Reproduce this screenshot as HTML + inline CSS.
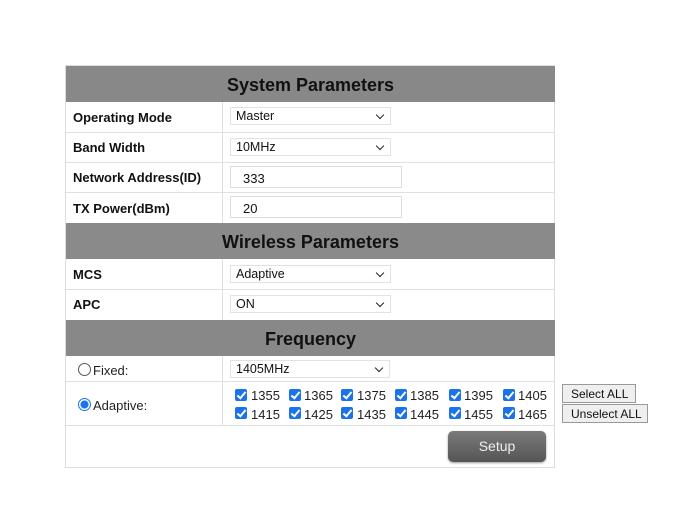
<!DOCTYPE html>
<html><head><meta charset="utf-8"><style>
body{margin:0;width:680px;height:519px;background:#fff;position:relative;font-family:"Liberation Sans",Arial,sans-serif;overflow:hidden}
.a{position:absolute}
.hd{position:absolute;left:66px;width:489px;background:#888;color:#111;font-weight:bold;font-size:18px;text-align:center}
.ln{position:absolute;left:66px;width:489px;height:1px;background:#e0e0e0}
.lb{position:absolute;left:73px;font-weight:bold;font-size:13px;color:#111}
.sel{position:absolute;left:230px;width:161px;height:18px;border:1px solid #e2e2e2;background:#fff;font-size:12.5px;color:#111;box-sizing:border-box;padding:1px 0 0 5px}
.sel:after{content:"";position:absolute;right:7px;top:4px;width:5px;height:5px;border-right:1.6px solid #222;border-bottom:1.6px solid #222;transform:rotate(45deg)}
.inp{position:absolute;left:230px;width:172px;height:22px;border:1px solid #ddd;box-sizing:border-box;font-size:13px;padding:4px 0 0 12px;color:#111}
.cb{position:absolute;width:12px;height:12px;background:#1a73e8;border-radius:2px}
.cb:after{content:"";position:absolute;left:4px;top:1px;width:3px;height:7px;border-right:2px solid #fff;border-bottom:2px solid #fff;transform:rotate(40deg)}
.ct{position:absolute;font-size:13px;color:#222}
.btn{position:absolute;left:562px;height:19px;border:1px solid #999;background:#efefef;font-size:12px;box-sizing:border-box;padding:2px 0 0 8px;color:#111}
</style></head><body>
<div class="a" style="left:65px;top:65px;width:490px;height:403px;border:1px solid #ddd;box-sizing:border-box"></div>
<div class="a" style="left:222px;top:102px;width:1px;height:324px;background:#e0e0e0"></div>
<div class="hd" style="top:66px;height:36px;line-height:38px">System Parameters</div>
<div class="ln" style="top:132px"></div><div class="ln" style="top:162px"></div><div class="ln" style="top:192px"></div>
<div class="lb" style="top:110px">Operating Mode</div>
<div class="lb" style="top:140px">Band Width</div>
<div class="lb" style="top:170px">Network Address(ID)</div>
<div class="lb" style="top:201px">TX Power(dBm)</div>
<div class="sel" style="top:107px">Master</div>
<div class="sel" style="top:138px">10MHz</div>
<div class="inp" style="top:166px">333</div>
<div class="inp" style="top:196px">20</div>
<div class="hd" style="top:223px;height:36px;line-height:38px;background:#8a8a8a">Wireless Parameters</div>
<div class="ln" style="top:289px"></div>
<div class="lb" style="top:267px">MCS</div>
<div class="lb" style="top:297px">APC</div>
<div class="sel" style="top:265px">Adaptive</div>
<div class="sel" style="top:295px">ON</div>
<div class="hd" style="top:320px;height:36px;line-height:38px">Frequency</div>
<div class="ln" style="top:381px"></div><div class="ln" style="top:425px"></div>
<div class="a" style="left:78px;top:363px;width:11px;height:11px;border:1px solid #555;border-radius:50%"></div>
<div class="ct" style="left:93px;top:363px">Fixed:</div>
<div class="a" style="left:78px;top:398px;width:11px;height:11px;border:1px solid #1a73e8;border-radius:50%;background:radial-gradient(circle,#1a73e8 3.5px,#fff 4.5px)"></div>
<div class="ct" style="left:93px;top:398px">Adaptive:</div>
<div class="sel" style="top:360px;width:160px">1405MHz</div>
<div class="cb" style="left:235px;top:389px"></div><div class="ct" style="left:251px;top:388px">1355</div>
<div class="cb" style="left:289px;top:389px"></div><div class="ct" style="left:304px;top:388px">1365</div>
<div class="cb" style="left:341px;top:389px"></div><div class="ct" style="left:357px;top:388px">1375</div>
<div class="cb" style="left:395px;top:389px"></div><div class="ct" style="left:410px;top:388px">1385</div>
<div class="cb" style="left:449px;top:389px"></div><div class="ct" style="left:464px;top:388px">1395</div>
<div class="cb" style="left:503px;top:389px"></div><div class="ct" style="left:518px;top:388px">1405</div>
<div class="cb" style="left:235px;top:407px"></div><div class="ct" style="left:251px;top:407px">1415</div>
<div class="cb" style="left:289px;top:407px"></div><div class="ct" style="left:304px;top:407px">1425</div>
<div class="cb" style="left:341px;top:407px"></div><div class="ct" style="left:357px;top:407px">1435</div>
<div class="cb" style="left:395px;top:407px"></div><div class="ct" style="left:410px;top:407px">1445</div>
<div class="cb" style="left:449px;top:407px"></div><div class="ct" style="left:464px;top:407px">1455</div>
<div class="cb" style="left:503px;top:407px"></div><div class="ct" style="left:518px;top:407px">1465</div>
<div class="btn" style="top:384px;width:74px">Select ALL</div>
<div class="btn" style="top:404px;width:86px">Unselect ALL</div>
<div class="a" style="left:448px;top:431px;width:98px;height:31px;border-radius:5px;background:linear-gradient(#7a7a7a,#555);box-shadow:0 1px 2px #999;color:#eee;font-size:14px;text-align:center;line-height:30px">Setup</div>
</body></html>
